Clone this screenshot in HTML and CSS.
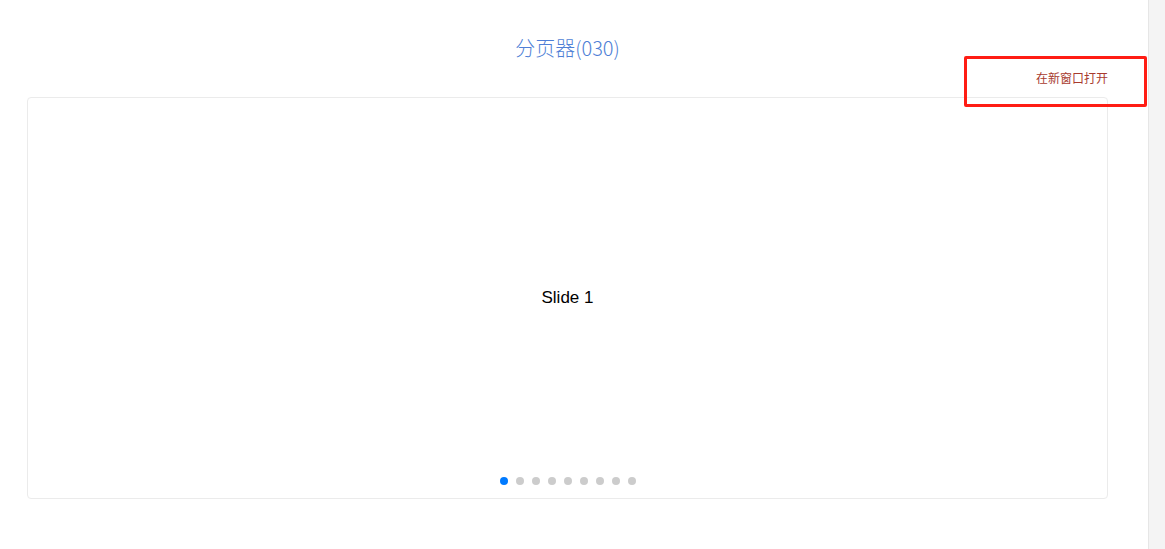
FILE: index.html
```html
<!DOCTYPE html>
<html lang="zh">
<head>
<meta charset="utf-8">
<title>分页器(030)</title>
<link rel="stylesheet" href="styles.css">
</head>
<body>
<div class="page">
  <h1 class="title">分页器(030)</h1>
  <div class="toolbar"><a class="open-link">在新窗口打开</a></div>
  <div class="swiper">
    <div class="slide">Slide 1</div>
    <div class="pagination">
      <span class="bullet active"></span>
      <span class="bullet"></span>
      <span class="bullet"></span>
      <span class="bullet"></span>
      <span class="bullet"></span>
      <span class="bullet"></span>
      <span class="bullet"></span>
      <span class="bullet"></span>
      <span class="bullet"></span>
    </div>
  </div>
</div>
<div class="highlight"></div>
<div class="scrollbar"></div>
</body>
</html>
```
FILE: styles.css
```css
html, body {
  margin: 0;
  padding: 0;
  background: #fff;
  overflow: hidden;
  height: 100%;
}
body {
  font-family: "Liberation Sans", "Noto Sans CJK SC", sans-serif;
}
.page {
  width: 1081px;
  padding: 36px 40px 0 27px;
}
.title {
  margin: 0;
  font-family: "Noto Sans CJK SC", "Noto Sans", sans-serif;
  font-weight: 300;
  font-size: 20px;
  line-height: 24px;
  text-align: center;
  color: #4f7fd6;
}
.toolbar {
  margin-top: 10px;
  text-align: right;
  font-size: 12px;
  line-height: 16px;
}
.open-link {
  font-family: "Noto Sans CJK SC", sans-serif;
  color: #a83a2e;
}
.swiper {
  position: relative;
  margin-top: 10px;
  height: 400px;
  border: 1px solid #ebebeb;
  border-radius: 4px;
  display: flex;
  align-items: center;
  justify-content: center;
}
.slide {
  font-size: 17px;
  color: #000;
}
.pagination {
  position: absolute;
  left: 0;
  right: 0;
  bottom: 13px;
  display: flex;
  justify-content: center;
  gap: 8px;
}
.bullet {
  width: 8px;
  height: 8px;
  border-radius: 50%;
  background: #cccccc;
}
.bullet.active {
  background: #007aff;
}
.highlight {
  position: absolute;
  left: 964px;
  top: 56px;
  width: 177px;
  height: 45px;
  border: 3px solid #ff1d14;
  border-radius: 2px;
}
.scrollbar {
  position: fixed;
  top: 0;
  right: 0;
  width: 16px;
  height: 100%;
  background: #f4f4f4;
  border-left: 1px solid #e6e6e6;
}
```
